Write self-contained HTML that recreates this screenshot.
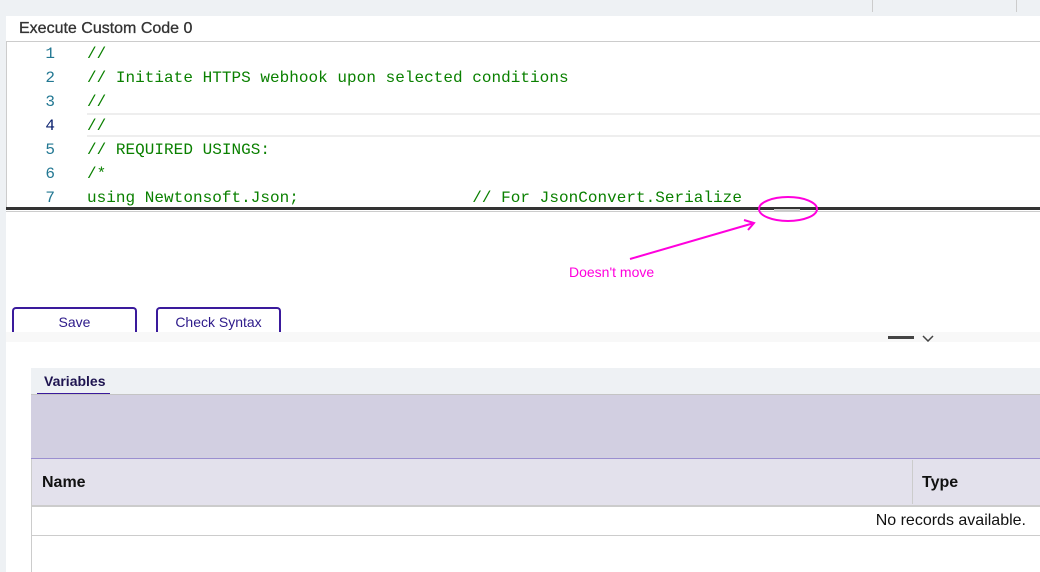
<!DOCTYPE html>
<html><head><style>
*{margin:0;padding:0;box-sizing:border-box}
body{width:1040px;height:572px;overflow:hidden;background:#eef1f4;position:relative;font-family:"Liberation Sans",sans-serif}
.a{position:absolute}
.code{font-family:"Liberation Mono",monospace;font-size:16px;color:#0a8000;white-space:pre;line-height:24px}
.ln{font-family:"Liberation Mono",monospace;font-size:16px;color:#237893;line-height:24px;text-align:right;width:50px}
.btn{border:2px solid #3a1a9c;border-bottom:none;border-radius:4px 4px 0 0;background:#fff;color:#2d1a8a;font-size:14px;text-align:center;line-height:26px}
</style></head><body>
<div class="a" style="left:872px;top:0;width:1px;height:12px;background:#ccc"></div>
<div class="a" style="left:1016px;top:0;width:1px;height:12px;background:#ccc"></div>
<div class="a" style="left:6px;top:16px;width:1034px;height:556px;background:#fff"></div>
<div class="a" style="left:19px;top:18px;font-size:16px;color:#333;line-height:22px;-webkit-text-stroke:0.3px #333">Execute Custom Code 0</div>
<div class="a" style="left:6px;top:41px;width:1034px;height:1px;background:#ccc"></div>
<div class="a" style="left:6px;top:41px;width:1px;height:167px;background:#ccc"></div>
<div class="a" style="left:87px;top:113px;width:953px;height:24px;border-top:2px solid #eee;border-bottom:2px solid #eee"></div>
<div class="a ln" style="left:5px;top:42px">1<br>2<br>3<br><span style="color:#0b216f">4</span><br>5<br>6<br>7</div>
<div class="a code" style="left:87px;top:42px;letter-spacing:0.03px">//
// Initiate HTTPS webhook upon selected conditions
//
//
// REQUIRED USINGS:
/*
using Newtonsoft.Json;                  // For JsonConvert.Serialize</div>
<div class="a" style="left:6px;top:207px;width:1034px;height:3px;background:#333"></div>
<div class="a" style="left:774px;top:209px;width:26px;height:2px;background:#ccc"></div>
<div class="a" style="left:6px;top:211px;width:1034px;height:1px;background:#ccc"></div>
<svg class="a" style="left:0;top:0" width="1040" height="300">
<ellipse cx="788" cy="209" rx="29" ry="12" fill="none" stroke="#ff00dd" stroke-width="2"/>
<path d="M630 259 L754 223 M744 220 L754 223 L748 230" fill="none" stroke="#ff00dd" stroke-width="2"/>
</svg>
<div class="a" style="left:569px;top:264px;font-size:14px;color:#ff00dd">Doesn't move</div>
<div class="a" style="left:6px;top:332px;width:1034px;height:10px;background:#f8f8f8"></div>
<div class="a btn" style="left:12px;top:307px;width:125px;height:25px">Save</div>
<div class="a btn" style="left:156px;top:307px;width:125px;height:25px">Check Syntax</div>
<div class="a" style="left:888px;top:336px;width:26px;height:3px;background:#444"></div>
<svg class="a" style="left:922px;top:334px" width="12" height="8"><path d="M1 2 L6 7 L11 2" fill="none" stroke="#444" stroke-width="1.5"/></svg>
<div class="a" style="left:31px;top:368px;width:1009px;height:26px;background:#eef1f4"></div>
<div class="a" style="left:44px;top:373px;font-size:14px;font-weight:bold;color:#1e1450">Variables</div>
<div class="a" style="left:37px;top:393px;width:73px;height:2px;background:#3a1a9c"></div>
<div class="a" style="left:31px;top:394px;width:1009px;height:64px;background:#d2cfe1;border-top:1px solid #c4c4c4"></div>
<div class="a" style="left:31px;top:458px;width:1009px;height:1px;background:#9b8fd0"></div>
<div class="a" style="left:32px;top:459px;width:1008px;height:46px;background:#e3e1ec"></div>
<div class="a" style="left:912px;top:460px;width:1px;height:44px;background:#ccc"></div>
<div class="a" style="left:42px;top:474px;font-size:16px;font-weight:bold;color:#111">Name</div>
<div class="a" style="left:922px;top:474px;font-size:16px;font-weight:bold;color:#111">Type</div>
<div class="a" style="left:32px;top:505px;width:1008px;height:2px;background:#ccc"></div>
<div class="a" style="left:31px;top:459px;width:1px;height:113px;background:#ccc"></div>
<div class="a" style="left:32px;top:535px;width:1008px;height:1px;background:#ccc"></div>
<div class="a" style="left:700px;top:512px;width:326px;text-align:right;font-size:16px;color:#111">No records available.</div>
</body></html>
